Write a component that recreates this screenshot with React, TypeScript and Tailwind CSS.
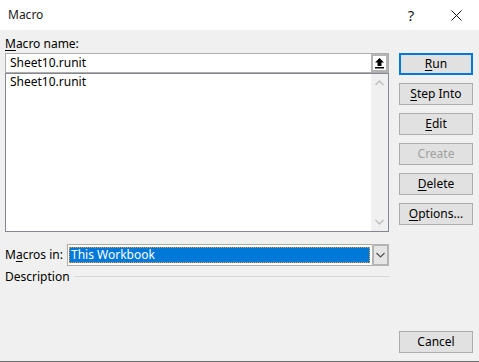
import React from 'react';

const font = { fontFamily: '"Segoe UI", "Noto Sans", sans-serif' };

const Btn: React.FC<{ children: React.ReactNode; primary?: boolean; disabled?: boolean }> = ({ children, primary, disabled }) => (
  <div
    className={`h-[22px] w-[74px] flex items-center justify-center bg-[#e1e1e1] text-[12px] leading-none ${
      primary ? 'border-2 border-[#0078d7]' : 'border border-[#adadad]'
    } ${disabled ? 'text-[#a0a0a0] bg-[#cccccc]/40' : 'text-black'}`}
  >
    {children}
  </div>
);

const U: React.FC<{ children: React.ReactNode }> = ({ children }) => (
  <span className="underline underline-offset-2">{children}</span>
);

const App: React.FC = () => {
  return (
    <div className="w-[479px] h-[362px] bg-[#f0f0f0] flex flex-col overflow-hidden border-b border-[#6e6e6e]" style={font}>
      {/* Title bar */}
      <div className="h-[30px] bg-white flex items-center pl-[8px] text-[12px] text-[#1a1a1a]">
        <span className="flex-1">Macro</span>
        <span className="w-[10px] text-center text-[15px] mr-[35px]">?</span>
        <svg width="11" height="11" viewBox="0 0 11 11" className="mr-[17px]">
          <path d="M0.5 0.5 L10.5 10.5 M10.5 0.5 L0.5 10.5" stroke="#111" strokeWidth="1" />
        </svg>
      </div>

      {/* Body */}
      <div className="flex-1 flex pl-[5px] pt-[7px]">
        {/* Left column */}
        <div className="w-[384px] flex flex-col">
          <div className="h-[16px] text-[12px] leading-[14px] text-black">
            <U>M</U>acro name:
          </div>
          <div className="h-[20px] bg-white border border-[#adadad] flex items-center">
            <span className="flex-1 pl-[4px] text-[12px] text-black">Sheet10.runit</span>
            <div className="w-[17px] h-[18px] border-2 border-[#b4b4b4] bg-white flex items-center justify-center">
              <svg width="11" height="12" viewBox="0 0 11 12">
                <path d="M5.5 1 L1 5.5 H3.5 V9 H7.5 V5.5 H10 Z" fill="#000" />
                <rect x="1" y="10" width="9" height="1.5" fill="#000" />
              </svg>
            </div>
          </div>
          <div className="h-[159px] bg-white border border-[#828790] flex">
            <div className="flex-1 pl-[4px] text-[12px] leading-[16px] text-black">Sheet10.runit</div>
            <div className="w-[17px] bg-[#f0f0f0] flex flex-col items-center justify-between py-[6px]">
              <svg width="9" height="6" viewBox="0 0 9 6">
                <path d="M0.5 5 L4.5 1 L8.5 5" fill="none" stroke="#c0c0c0" strokeWidth="1.5" />
              </svg>
              <svg width="9" height="6" viewBox="0 0 9 6">
                <path d="M0.5 1 L4.5 5 L8.5 1" fill="none" stroke="#c0c0c0" strokeWidth="1.5" />
              </svg>
            </div>
          </div>

          <div className="mt-[12px] h-[22px] flex items-center">
            <div className="w-[62px] text-[12px] text-black">
              M<U>a</U>cros in:
            </div>
            <div className="flex-1 h-[22px] bg-white border border-[#adadad] flex items-center">
              <div className="flex-1 h-[16px] ml-[1px] mr-[2px] bg-[#0078d7] border border-dotted border-[#ff9a2e] flex items-center pl-[1px] text-[12px] text-white">
                This Workbook
              </div>
              <div className="w-[17px] h-[22px] -mr-[1px] bg-[#e5e5e5] border-2 border-[#b4b4b4] flex items-center justify-center">
                <svg width="9" height="6" viewBox="0 0 9 6">
                  <path d="M0.5 1 L4.5 5 L8.5 1" fill="none" stroke="#505050" strokeWidth="1.2" />
                </svg>
              </div>
            </div>
          </div>

          <div className="mt-[3px] h-[15px] flex items-center">
            <span className="text-[12px] text-black mr-[5px]">Description</span>
            <div className="flex-1 h-px bg-[#d5d5d5]" />
          </div>
        </div>

        {/* Right column */}
        <div className="ml-[10px] flex flex-col">
          <div className="h-[16px]" />
          <div className="flex flex-col gap-[8px]">
            <Btn primary><span><U>R</U>un</span></Btn>
            <Btn><span><U>S</U>tep Into</span></Btn>
            <Btn><span><U>E</U>dit</span></Btn>
            <Btn disabled>Create</Btn>
            <Btn><span><U>D</U>elete</span></Btn>
            <Btn><span><U>O</U>ptions...</span></Btn>
          </div>
          <div className="flex-1" />
          <div className="mb-[8px]">
            <Btn>Cancel</Btn>
          </div>
        </div>
      </div>
    </div>
  );
};

export default App;
